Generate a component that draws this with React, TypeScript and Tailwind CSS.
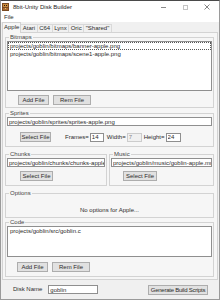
import type { ReactNode } from 'react';

const UI = "font-['Liberation_Sans',Arial,sans-serif] text-[6px] leading-[7px] text-[#2b2b2b]";

function Button({ label, className = '' }: { label: string; className?: string }) {
  return (
    <button
      type="button"
      className={`flex h-[10px] shrink-0 items-center justify-center whitespace-nowrap border border-[#adadad] bg-[#e1e1e1] text-[6px] leading-none ${className}`}
    >
      {label}
    </button>
  );
}

function Group({ title, className = '', children }: { title: string; className?: string; children: ReactNode }) {
  return (
    <fieldset className={`min-w-0 border border-[#d3d3d3] px-[1px] ${className}`}>
      <legend className="ml-[2px] px-[1px] leading-[7px] text-[#444]">{title}</legend>
      {children}
    </fieldset>
  );
}

function TextBox({ value, className = '', disabled }: { value: string; className?: string; disabled?: boolean }) {
  return (
    <input
      readOnly
      value={value}
      disabled={disabled}
      className={`h-[9px] min-w-0 shrink-0 border pl-[1px] text-[6px] leading-none outline-none ${
        disabled ? 'border-[#cccccc] bg-[#f0f0f0] text-[#8a8a8a]' : 'border-[#8f8f8f] bg-white text-[#2b2b2b]'
      } ${className}`}
    />
  );
}

function AppIcon() {
  return (
    <svg width="7" height="8" viewBox="0 0 7 8" aria-hidden>
      <rect width="7" height="8" fill="#7a4a22" />
      <rect x="1" y="1" width="5" height="3" fill="#c98a3c" />
      <rect x="2" y="2" width="1" height="1" fill="#2b1a0c" />
      <rect x="4" y="2" width="1" height="1" fill="#2b1a0c" />
      <rect x="1" y="5" width="5" height="2" fill="#a9692d" />
      <rect x="3" y="5" width="1" height="1" fill="#e8c070" />
    </svg>
  );
}

const TABS = ['Atari', 'C64', 'Lynx', 'Oric', '"Shared"'];

export default function App() {
  return (
    <div className={`flex h-[300px] w-[220px] flex-col border border-[#9a9a9a] border-t-[#4a4a4a] bg-[#f0f0f0] ${UI}`}>
      {/* title bar */}
      <div className="flex h-[12px] shrink-0 items-center bg-white">
        <div className="ml-[1px]">
          <AppIcon />
        </div>
        <span className="ml-[4px] text-[#222]">8bit-Unity Disk Builder</span>
        <div className="ml-auto mr-[1px] flex h-full">
          <div className="flex w-[22px] items-center justify-center">
            <div className="h-[1px] w-[5px] bg-[#8a8a8a]" />
          </div>
          <div className="flex w-[22px] items-center justify-center">
            <div className="h-[5px] w-[5px] border border-[#c4c4c4]" />
          </div>
          <div className="flex w-[22px] items-center justify-center">
            <svg width="6" height="6" viewBox="0 0 6 6" aria-hidden>
              <path d="M0.5 0.5 L5.5 5.5 M5.5 0.5 L0.5 5.5" stroke="#777" strokeWidth="0.9" />
            </svg>
          </div>
        </div>
      </div>

      {/* menu */}
      <div className="flex h-[9px] shrink-0 items-center bg-white pl-[3px]">File</div>

      {/* tabs */}
      <div className="flex h-[10px] shrink-0 items-end pl-[1px]">
        <div className="relative z-10 -mb-[1px] flex h-[11px] items-center border border-b-0 border-[#d3d3d3] bg-[#f6f6f6] px-[1px] pb-[1px]">
          Apple
        </div>
        {TABS.map(t => (
          <div
            key={t}
            className="flex h-[8px] items-center border border-l-0 border-b-0 border-[#d9d9d9] bg-[#f0f0f0] px-[1.5px]"
          >
            {t}
          </div>
        ))}
      </div>

      {/* tab page */}
      <div className="mx-[1px] flex flex-col border border-[#d3d3d3] bg-[#f6f6f6] pb-[2px] pl-[2px] pr-[3px]">
        <Group title="Bitmaps" className="mt-[1px] pb-[2px]">
          <div className="h-[50px] w-full overflow-hidden border border-[#8f8f8f] bg-white">
            <div className="h-[8px] whitespace-nowrap border border-dotted border-[#555] pl-[1px] leading-[6px]">
              projects/goblin/bitmaps/banner-apple.png
            </div>
            <div className="h-[8px] whitespace-nowrap pl-[2px] leading-[8px]">
              projects/goblin/bitmaps/scene1-apple.png
            </div>
          </div>
          <div className="mt-[4px] flex gap-[4px] pl-[11px]">
            <Button label="Add File" className="w-[31px]" />
            <Button label="Rem File" className="w-[38px]" />
          </div>
        </Group>

        <Group title="Sprites" className="mt-[2px] pb-[4px]">
          <TextBox value="projects/goblin/sprites/sprites-apple.png" className="w-full" />
          <div className="mt-[6px] flex items-center">
            <Button label="Select File" className="ml-[13px] w-[31px]" />
            <span className="ml-[14px]">Frames=</span>
            <TextBox value="14" className="ml-[1px] w-[14px]" />
            <span className="ml-[3px]">Width=</span>
            <TextBox value="7" disabled className="ml-[1px] w-[15px]" />
            <span className="ml-[2px]">Height=</span>
            <TextBox value="24" className="ml-[1px] w-[15px]" />
          </div>
        </Group>

        <div className="mt-[4px] flex gap-[2px]">
          <Group title="Chunks" className="w-[102px] shrink-0 pb-[4px]">
            <TextBox value="projects/goblin/chunks/chunks-apple.prg" className="w-full" />
            <Button label="Select File" className="ml-[13px] mt-[4px] w-[33px]" />
          </Group>
          <Group title="Music" className="flex-1 pb-[4px]">
            <TextBox value="projects/goblin/music/goblin-apple.mus" className="w-full" />
            <Button label="Select File" className="ml-[12px] mt-[4px] w-[34px]" />
          </Group>
        </div>

        <Group title="Options" className="mt-[4px]">
          <div className="flex h-[20px] items-end justify-center pb-[3px]">No options for Apple...</div>
        </Group>

        <Group title="Code" className="mt-[1px] pb-[4px]">
          <div className="h-[31px] w-full overflow-hidden border border-[#8f8f8f] bg-white">
            <div className="h-[8px] whitespace-nowrap pl-[2px] leading-[8px]">projects/goblin/src/goblin.c</div>
          </div>
          <div className="mt-[5px] flex gap-[4px] pl-[10px]">
            <Button label="Add File" className="w-[31px]" />
            <Button label="Rem File" className="w-[38px]" />
          </div>
        </Group>
      </div>

      {/* footer */}
      <div className="mt-[4px] flex h-[11px] items-center">
        <span className="ml-[12px]">Disk Name</span>
        <TextBox value="goblin" className="ml-[6px] w-[50px]" />
        <Button label="Generate Build Scripts" className="ml-auto mr-[11px] w-[60px] tracking-[-0.25px]" />
      </div>
    </div>
  );
}
